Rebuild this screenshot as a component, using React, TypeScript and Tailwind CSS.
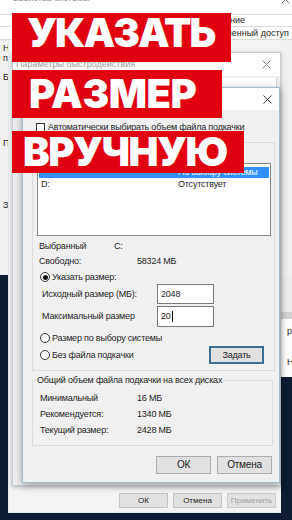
import type { ReactNode } from 'react'

// ── small Win10-ish controls ──────────────────────────────────────
function CloseX({ color = '#444' }: { color?: string }) {
  return (
    <svg width="9" height="9" viewBox="0 0 9 9" fill="none" stroke={color} strokeWidth="1">
      <path d="M0.5 0.5 L8.5 8.5 M8.5 0.5 L0.5 8.5" />
    </svg>
  )
}

function Check() {
  return <span className="inline-block h-[9px] w-[9px] shrink-0 border border-[#333] bg-white" />
}

function Radio({ on }: { on?: boolean }) {
  return (
    <span className="flex h-[10px] w-[10px] shrink-0 items-center justify-center rounded-full border border-[#333] bg-white">
      {on && <span className="h-[5px] w-[5px] rounded-full bg-[#111]" />}
    </span>
  )
}

function Btn({ children, className }: { children: ReactNode; className: string }) {
  return (
    <button className={'flex items-center justify-center border bg-[#e1e1e1] ' + className}>
      {children}
    </button>
  )
}

export default function App() {
  return (
    <div className="relative h-[520px] w-[292px] overflow-hidden bg-[#0d1c30] font-['Liberation_Sans',Arial,sans-serif] text-[9px] leading-none text-[#1e1e1e]">

      {/* ══ back window: Свойства системы (top) ══ */}
      <div className="absolute left-0 top-0 h-[275px] w-[292px] overflow-hidden bg-[#f0f0f0]">
        <div className="flex h-[14px] justify-between bg-white pl-[12px] pr-[2px] text-[#8c8c8c]">
          <span className="-mt-[6px]">Свойства системы</span>
          <span className="-mt-[5px]"><CloseX color="#777" /></span>
        </div>
        <div className="flex h-[13px] items-center justify-end border-y border-[#d9d9d9] bg-white pr-[47px]">Оборудование</div>
        <div className="flex h-[13px] items-center justify-end border-b border-[#d9d9d9] bg-white pr-[3px]">Удаленный доступ</div>
        {/* only the first letters peek out from behind the front windows */}
        <div className="pl-[3px] pt-[3px] leading-[10px]">
          <p>Не</p>
          <p>па</p>
          <p className="mt-[9px]">Бы</p>
          <p className="mt-[56px]">Пр</p>
          <p className="mt-[52px]">За</p>
        </div>
      </div>

      {/* right strip of another window */}
      <div className="absolute left-[281px] top-[275px] h-[102px] w-[11px] bg-white">
        <div className="h-[37px] bg-[#ececec]" />
        <div className="h-[7px] bg-[#d2d2d2]" />
        <p className="mt-[8px] pl-[6px]">р</p>
        <p className="mt-[22px] pl-[6px]">Н</p>
      </div>

      {/* ══ Свойства системы (bottom with buttons) ══ */}
      <div className="absolute left-[8px] top-[40px] flex h-[473px] w-[273px] flex-col justify-end border-b border-l border-[#e6ebef] bg-[#f3f3f3] pb-[4px]">
        <div className="flex justify-end gap-[5px] pr-[5px] text-[8px]">
          <Btn className="h-[15px] w-[49px] border-[#c4c4c4]">ОК</Btn>
          <Btn className="h-[15px] w-[49px] border-[#c4c4c4]">Отмена</Btn>
          <Btn className="h-[15px] w-[49px] border-[#cccccc] bg-[#d0d0d0] text-[#a3a3a3]">Применить</Btn>
        </div>
      </div>

      {/* ══ Параметры быстродействия ══ */}
      <div className="absolute left-[12px] top-[52px] h-[434px] w-[269px] border border-[#c5ced6] bg-[#f0f0f0] shadow-[0_1px_4px_rgba(0,0,0,0.25)]">
        <div className="flex h-[23px] items-center justify-between bg-white pl-[3px] pr-[9px] text-[#9a9a9a]">
          <span>Параметры быстродействия</span>
          <CloseX color="#888" />
        </div>
        <div className="mx-[3px] mt-[2px] h-[10px] border-b border-r border-[#d5d5d5] bg-white" />
      </div>

      {/* ══ Виртуальная память ══ */}
      <div className="absolute left-[22px] top-[87px] flex h-[396px] w-[258px] flex-col border border-[#9ebdd3] bg-[#f0f0f0] tracking-[-0.2px] shadow-[0_2px_8px_rgba(0,0,0,0.35)]">
        <div className="flex h-[22px] shrink-0 items-center justify-end bg-white pr-[7px]">
          <CloseX />
        </div>

        <div className="ml-[13px] mt-[12px] flex h-[10px] items-center gap-[3px]">
          <Check />
          <span>Автоматически выбирать объем файла подкачки</span>
        </div>

        {/* per-disk group (its caption and list header sit under the banner) */}
        <div className="ml-[9px] mr-[4px] mt-[10px] border border-[#dcdcdc] pb-[6px]">
          <div className="h-[20px]" />
          <div className="ml-[4px] mr-[3px] h-[73px] border border-[#828790] bg-white pt-[3px]">
            <div className="mx-[1px] flex h-[11px] items-center bg-[#3391ff] pl-[139px] text-white">
              По выбору системы
            </div>
            <div className="mx-[1px] mt-[1px] flex h-[11px] items-center pl-[2px]">
              <span className="w-[137px]">D:</span>
              <span>Отсутствует</span>
            </div>
          </div>

          <div className="mt-[3px] flex h-[15px] items-center pl-[6px]">
            <span className="w-[75px]">Выбранный</span>
            <span>C:</span>
          </div>
          <div className="flex h-[15px] items-center pl-[6px]">
            <span className="w-[98px]">Свободно:</span>
            <span>58324 МБ</span>
          </div>

          <div className="mt-[1px] flex h-[14px] items-center gap-[2px] pl-[7px]">
            <Radio on />
            <span>Указать размер:</span>
          </div>
          <div className="flex h-[20px] items-center pl-[9px]">
            <span className="w-[115px]">Исходный размер (МБ):</span>
            <div className="flex h-[20px] w-[57px] items-center border border-[#7a7a7a] bg-white pl-[3px]">2048</div>
          </div>
          <div className="mt-[2px] flex h-[21px] items-center pl-[9px]">
            <span className="w-[115px]">Максимальный размер</span>
            <div className="flex h-[21px] w-[57px] items-center border border-[#7a7a7a] bg-white pl-[3px]">
              20<span className="ml-[1px] h-[11px] border-l border-[#111]" />
            </div>
          </div>
          <div className="mt-[4px] flex h-[14px] items-center gap-[2px] pl-[7px]">
            <Radio />
            <span>Размер по выбору системы</span>
          </div>
          <div className="mt-[1px] flex h-[18px] items-center justify-between pl-[7px] pr-[10px]">
            <div className="flex items-center gap-[2px]">
              <Radio />
              <span>Без файла подкачки</span>
            </div>
            <Btn className="h-[18px] w-[55px] border-2 border-[#3d6f94]">Задать</Btn>
          </div>
        </div>

        {/* totals group */}
        <fieldset className="ml-[9px] mr-[6px] mt-[4px] border border-[#dcdcdc] pb-[7px] pt-[4px]">
          <legend className="ml-[3px] px-[1px] leading-[11px]">Общий объем файла подкачки на всех дисках</legend>
          {[
            ['Минимальный', '16 МБ'],
            ['Рекомендуется:', '1340 МБ'],
            ['Текущий размер:', '2428 МБ'],
          ].map(([k, v]) => (
            <div key={k} className="flex h-[16px] items-center pl-[7px]">
              <span className="w-[97px]">{k}</span>
              <span>{v}</span>
            </div>
          ))}
        </fieldset>

        <div className="mt-[10px] flex justify-end gap-[6px] pr-[7px] text-[10px]">
          <Btn className="h-[18px] w-[55px] border-[#adadad]">ОК</Btn>
          <Btn className="h-[18px] w-[55px] border-[#adadad]">Отмена</Btn>
        </div>
      </div>

      {/* ══ red title banners ══ */}
      <div className="absolute left-[12px] top-[13px] flex h-[49px] w-[219px] items-start bg-[#e1000f] pl-[15px] font-['Inter',sans-serif] text-[40px] font-black leading-none tracking-[-2px] text-white">
        УКАЗАТЬ
      </div>
      <div className="absolute left-[12px] top-[70px] flex h-[48px] w-[210px] items-start bg-[#e1000f] pl-[17px] pt-[4px] font-['Inter',sans-serif] text-[40px] font-black leading-none tracking-[-0.5px] text-white">
        РАЗМЕР
      </div>
      <div className="absolute left-[12px] top-[131px] flex h-[42px] w-[232px] items-start bg-[#e1000f] pl-[11px] pt-[1px] font-['Inter',sans-serif] text-[40px] font-black leading-none tracking-[-1.5px] text-white">
        ВРУЧНУЮ
      </div>
    </div>
  )
}
